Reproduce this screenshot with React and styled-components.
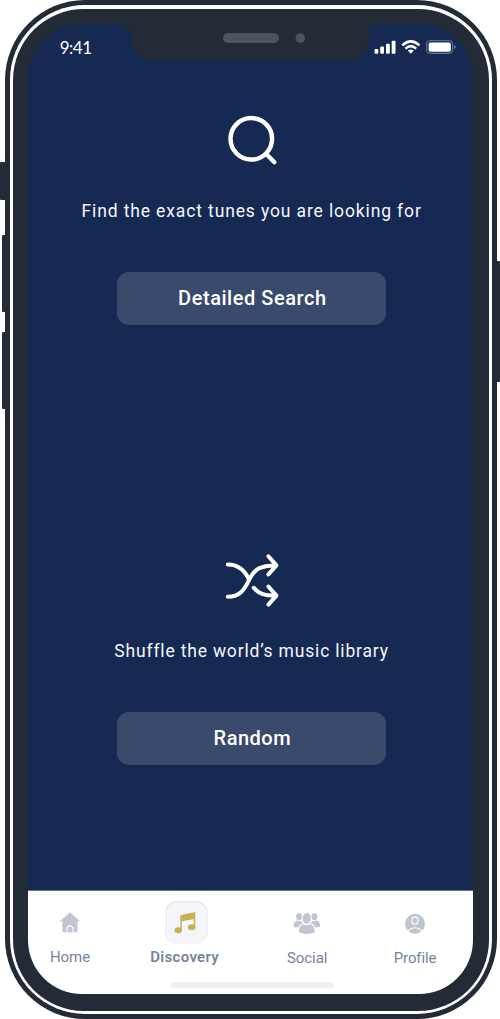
import React from "react";

import styled, { createGlobalStyle } from "styled-components";

const bodyColor = "#232b37";
const navyColor = "#162953";
const labelColor = "#77839c";
const iconColor = "#c0c6d0";

const SearchIcon = () => (
  <svg width="60" height="60" viewBox="221 108 60 60" fill="none">
    <circle cx="250.3" cy="138.8" r="20.8" stroke="#fff" strokeWidth="4.5" />
    <path
      d="M265.7 154.5L273.4 162.2"
      stroke="#fff"
      strokeWidth="4.4"
      strokeLinecap="round"
    />
  </svg>
);

const ShuffleIcon = () => (
  <svg
    width="60"
    height="60"
    viewBox="222 548 60 60"
    fill="none"
    stroke="#fff"
    strokeWidth="4"
    strokeLinecap="round"
    strokeLinejoin="round"
  >
    <path d="M227.8 564.6C238.5 564.6 244.5 570 249 579.5" />
    <path d="M227.8 596.7C240 596.7 244.5 589.5 249 580C254.5 569 260 565.4 276 565.4" />
    <path d="M253.8 587.8C258.5 593.5 264 595.6 276 595.6" />
    <path d="M268.4 556.3L276.4 565.4L268.4 574.4" />
    <path d="M268.4 586.5L276.4 595.6L268.4 604.6" />
  </svg>
);

const StatusIcons = () => (
  <svg width="82" height="16" viewBox="374 39 82 16" fill="#fff">
    <rect x="374.5" y="49" width="3.8" height="4.8" rx="1" />
    <rect x="380.2" y="46.5" width="3.8" height="7.3" rx="1" />
    <rect x="386" y="43.7" width="3.8" height="10.1" rx="1" />
    <rect x="391.7" y="40.8" width="3.8" height="13" rx="1" />
    <g fill="none" stroke="#fff" strokeWidth="2.5">
      <path d="M402.3 45.4Q410.8 37.3 419.4 45.4" />
      <path d="M405.4 48.6Q410.8 43.7 416.2 48.6" />
    </g>
    <path d="M407.8 50.6Q410.8 48.2 413.8 50.6L410.8 53.7Z" />
    <rect
      x="426.6"
      y="40.7"
      width="26"
      height="12.7"
      rx="3.6"
      fill="none"
      stroke="#68769a"
      strokeWidth="1.1"
    />
    <rect x="428.6" y="42.4" width="22.2" height="9.3" rx="1.8" />
    <path d="M453.9 44.9Q455.9 45.5 455.9 47.1T453.9 49.3Z" fill="#68769a" />
  </svg>
);

const NotchShape = () => (
  <svg width="250" height="38" viewBox="124 23 250 38" fill={bodyColor}>
    <path d="M124 23H374V24.5Q369.8 25 369.8 30V37A24 24 0 0 1 345.8 61H155.3A24 24 0 0 1 131.3 37V31.3H125V24.5H124Z" />
    <rect x="223" y="33" width="56" height="10" rx="5" fill="#4d535f" />
    <circle cx="300.3" cy="38" r="4.8" fill="#4d535f" />
  </svg>
);

const HomeIcon = () => (
  <svg width="22" height="24" viewBox="59 911 22 24" fill={iconColor}>
    <path d="M70 912.2L80.2 921.2H77.6V930.6Q77.6 932.4 75.8 932.4H73.6V928.9A3.6 3.6 0 0 0 66.4 928.9V932.4H64.2Q62.4 932.4 62.4 930.6V921.2H59.8Z" />
    <path d="M67.5 932.4V928.9A2.5 2.5 0 0 1 72.5 928.9V932.4Z" />
  </svg>
);

const MusicIcon = () => (
  <svg width="24" height="24" viewBox="174 911 24 24" fill="#c5b353">
    <path d="M180.3 915.3L195.3 912.1V927.2H193.8V918.9L181.8 921.3V931H180.3Z" />
    <ellipse cx="178.2" cy="930.2" rx="3.7" ry="3" />
    <ellipse cx="191.6" cy="927.3" rx="3.7" ry="3" />
  </svg>
);

const SocialIcon = () => (
  <svg width="28" height="24" viewBox="293 911 28 24" fill={iconColor}>
    <ellipse cx="299.2" cy="916.6" rx="3.1" ry="3.7" />
    <ellipse cx="314.4" cy="916.6" rx="3.1" ry="3.7" />
    <path d="M293.4 926.6Q293.5 921.2 297.4 920.6Q299.2 921.6 301.2 920.8L303 923.2Q299.4 924 298.6 927.3Q295.5 927.8 293.4 926.6Z" />
    <path d="M320.2 926.6Q320.1 921.2 316.2 920.6Q314.4 921.6 312.4 920.8L310.6 923.2Q314.2 924 315 927.3Q318.1 927.8 320.2 926.6Z" />
    <ellipse
      cx="306.8"
      cy="918.4"
      rx="4.5"
      ry="5.9"
      stroke="#fff"
      strokeWidth="1"
    />
    <path d="M298.8 932.3C299 927.5 300.5 925 303.6 924.3Q306.8 926.3 310 924.3C313.1 925 314.7 927.5 314.8 932.3Q306.8 935.6 298.8 932.3Z" />
  </svg>
);

const ProfileIcon = () => (
  <svg width="22" height="24" viewBox="404 911 22 24">
    <circle cx="415" cy="923.8" r="10" fill={iconColor} />
    <g fill="none" stroke="#fff" strokeWidth="1.1">
      <rect x="412" y="916.9" width="6" height="7.4" rx="3" />
      <path d="M407.6 930.9Q415 924.5 422.4 930.9" />
    </g>
  </svg>
);

const tabs = [
  { label: "Home", icon: <HomeIcon />, width: 83.6, spacing: -0.05 },
  {
    label: "Discovery",
    icon: <MusicIcon />,
    width: 148.8,
    spacing: 0.3,
    active: true,
  },
  { label: "Social", icon: <SocialIcon />, width: 93.2, spacing: -0.05, drop: 1 },
  { label: "Profile", icon: <ProfileIcon />, width: 122.6, spacing: -0.1, drop: 1 },
];

const App = () => (
  <Stage>
    <GlobalStyle />
    <SideButton $x={0} $y={162} $w={10} $h={38} />
    <SideButton $x={1.5} $y={235} $w={8} $h={76.5} />
    <SideButton $x={1.5} $y={332} $w={8} $h={76.5} />
    <SideButton $x={492} $y={261} $w={8} $h={121} />
    <Frame>
      <Rim>
        <Body>
          <Screen>
            <StatusBar>
              <Clock>9:41</Clock>
              <StatusIcons />
            </StatusBar>
            <Content>
              <Option>
                <SearchIcon />
                <Caption $spacing={0.87}>
                  Find the exact tunes you are looking for
                </Caption>
                <Button $spacing={0.54}>Detailed Search</Button>
              </Option>
              <Option>
                <ShuffleIcon />
                <Caption $spacing={0.82}>
                  Shuffle the world’s music library
                </Caption>
                <Button $spacing={0.5}>Random</Button>
              </Option>
            </Content>
            <TabBar>
              {tabs.map((tab) => (
                <Tab key={tab.label} $width={tab.width}>
                  <TabIcon $active={tab.active}>{tab.icon}</TabIcon>
                  <TabLabel
                    $active={tab.active}
                    $spacing={tab.spacing}
                    $drop={tab.drop}
                  >
                    {tab.label}
                  </TabLabel>
                </Tab>
              ))}
            </TabBar>
            <HomeIndicator />
          </Screen>
        </Body>
      </Rim>
    </Frame>
    <Notch>
      <NotchShape />
    </Notch>
  </Stage>
);
export default App;

const GlobalStyle = createGlobalStyle`
  * {
    box-sizing: border-box;
  }

  body {
    margin: 0;
    background: #fff;
    font-family: Roboto, "Liberation Sans", sans-serif;
  }

  svg {
    display: block;
    flex: none;
  }
`;

const Stage = styled.div`
  position: relative;
  width: 500px;
  height: 1019px;
  padding: 0 3px 0 5px;
  overflow: hidden;
`;

const SideButton = styled.div`
  position: absolute;
  left: ${({ $x }) => $x}px;
  top: ${({ $y }) => $y}px;
  width: ${({ $w }) => $w}px;
  height: ${({ $h }) => $h}px;
  border-radius: 1px;
  background: ${bodyColor};
`;

const Frame = styled.div`
  position: relative;
  height: 1019px;
  padding: 5px;
  border-radius: 80px;
  background: ${bodyColor};
`;

const Rim = styled.div`
  height: 100%;
  padding: 3.5px 3.5px 3.5px 2.7px;
  border-radius: 75px;
  background: #fff;
`;

const Body = styled.div`
  height: 100%;
  padding: 15.5px 15.5px 16.5px 15.5px;
  border-radius: 71px;
  background: ${bodyColor};
`;

const Screen = styled.div`
  display: flex;
  flex-direction: column;
  height: 100%;
  border-radius: 54px;
  background: ${navyColor};
  overflow: hidden;
`;

const StatusBar = styled.div`
  display: flex;
  justify-content: space-between;
  align-items: center;
  height: 46.5px;
  padding: 0 17px 0 31.5px;
`;

const Clock = styled.span`
  padding-top: 2px;
  color: #fff;
  font-family: Lato, sans-serif;
  font-size: 17px;
  line-height: 20px;
  letter-spacing: -0.5px;
`;

const Content = styled.main`
  display: flex;
  flex-direction: column;
  height: 819.5px;
  padding: 37.5px 0 0 2px;
  gap: 222px;
`;

const Option = styled.section`
  display: flex;
  flex-direction: column;
  align-items: center;
  height: 218px;
`;

const Caption = styled.p`
  margin: 33px 0 50.5px;
  color: #f5f7fb;
  font-size: 17.5px;
  line-height: 20px;
  letter-spacing: ${({ $spacing }) => $spacing}px;
  white-space: nowrap;
`;

const Button = styled.button`
  flex: none;
  width: 269px;
  height: 53.5px;
  padding: 0 0 1px 1.5px;
  border: 0;
  border-radius: 12px;
  background: #394a6d;
  color: #fff;
  font-family: inherit;
  font-size: 20px;
  font-weight: 500;
  letter-spacing: ${({ $spacing }) => $spacing}px;
`;

const TabBar = styled.nav`
  display: flex;
  flex: none;
  height: 92px;
  padding-top: 10px;
  border-top: 1px solid #65708a;
  background: #fff;
`;

const Tab = styled.div`
  display: flex;
  flex: none;
  flex-direction: column;
  align-items: center;
  width: ${({ $width }) => $width}px;
`;

const TabIcon = styled.div`
  display: flex;
  justify-content: center;
  align-items: center;
  width: 43px;
  height: 43px;
  border-radius: 12px;
  background: ${({ $active }) => ($active ? "#f4f5f9" : "transparent")};
  box-shadow: ${({ $active }) => ($active ? "inset 0 1px 2px #dcdee3" : "none")};
`;

const TabLabel = styled.span`
  margin-top: ${({ $drop }) => 4 + ($drop || 0)}px;
  margin-right: ${({ $active }) => ($active ? 3 : 0)}px;
  color: ${labelColor};
  font-size: 15px;
  font-weight: ${({ $active }) => ($active ? 600 : 400)};
  line-height: 18px;
  letter-spacing: ${({ $spacing }) => $spacing}px;
`;

const HomeIndicator = styled.div`
  flex: 1;
  background: #fff;

  &::after {
    content: "";
    display: block;
    width: 163px;
    height: 6px;
    margin-left: 142.5px;
    border-radius: 3px;
    background: #f0f0f1;
  }
`;

const Notch = styled.div`
  position: absolute;
  left: 124px;
  top: 23px;
`;
